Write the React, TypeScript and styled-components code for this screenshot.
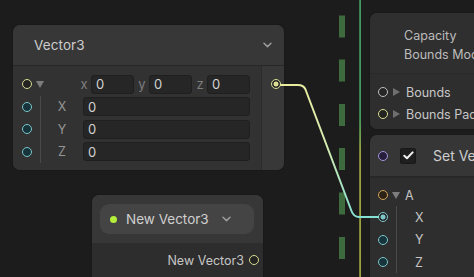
import React from "react";
import styled, { createGlobalStyle, css } from "styled-components";

const GlobalStyle = createGlobalStyle`
  html, body { margin: 0; padding: 0; background: #1c1c1c; }
  body { font-family: Inter, "Noto Sans", sans-serif; overflow: hidden; }
  * { box-sizing: border-box; }
`;

const Canvas = styled.div`
  position: relative;
  width: 474px;
  height: 277px;
  overflow: hidden;
  background: #1c1c1c;
`;

const Layer = styled.svg<{ $top?: boolean }>`
  position: absolute;
  left: 0;
  top: 0;
  width: 474px;
  height: 277px;
  pointer-events: none;
  z-index: ${(p) => (p.$top ? 5 : 0)};
`;

const Node = styled.div<{ $x: number; $y: number; $w: number; $h?: number }>`
  position: absolute;
  left: ${(p) => p.$x}px;
  top: ${(p) => p.$y}px;
  width: ${(p) => p.$w}px;
  ${(p) => (p.$h ? `height: ${p.$h}px;` : "")}
  border-radius: 7px;
  overflow: hidden;
  display: flex;
  flex-direction: column;
  background: #303030;
  box-shadow: 0 0 0 1px #191919;
  z-index: 1;
`;

const Header = styled.div<{ $h: number }>`
  height: ${(p) => p.$h}px;
  flex: none;
  display: flex;
  align-items: center;
  background: #373737;
  border-bottom: 1px solid #272727;
`;

const TitleHeader = styled(Header)`
  justify-content: space-between;
  padding: 0 12px 0 21px;
`;

const Title = styled.span`
  font-size: 13.5px;
  color: #cdcdcd;
  letter-spacing: 0.1px;
`;

const Body = styled.div`
  flex: 1;
  display: flex;
`;

const Inputs = styled.div`
  flex: 1;
  display: flex;
  flex-direction: column;
  padding: 7px 11px 7px 9px;
  background: #323232;
`;

const Outputs = styled.div`
  width: 23px;
  flex: none;
  display: flex;
  flex-direction: column;
  padding: 7px 0 0 9px;
  background: #383838;
  border-left: 1px solid #2b2b2b;
`;

const Row = styled.div<{ $h?: number }>`
  height: ${(p) => p.$h ?? 22.5}px;
  display: flex;
  align-items: center;
  flex: none;
`;

type PortKind = "yellow" | "teal" | "grey" | "purple" | "orange";
const portColors: Record<PortKind, [string, string]> = {
  yellow: ["#d9dd92", "#232321"],
  teal: ["#7cc6ca", "#16343a"],
  grey: ["#bfbfbf", "#262626"],
  purple: ["#a594d9", "#261e3c"],
  orange: ["#d0a35d", "#2c2316"],
};

const Port = styled.span<{ $kind: PortKind; $on?: boolean }>`
  width: 10px;
  height: 10px;
  flex: none;
  border-radius: 50%;
  border: 1.6px solid ${(p) => portColors[p.$kind][0]};
  background: ${(p) => portColors[p.$kind][1]};
  ${(p) =>
    p.$on &&
    css`
      background: radial-gradient(circle, ${portColors[p.$kind][0]} 0 2.2px, #262626 2.8px);
    `}
`;

const TriDown = styled.span<{ $ml: number }>`
  width: 0;
  height: 0;
  flex: none;
  margin-left: ${(p) => p.$ml}px;
  border-left: 4.5px solid transparent;
  border-right: 4.5px solid transparent;
  border-top: 7px solid #7d7d7d;
`;

const TriRight = styled.span`
  width: 0;
  height: 0;
  flex: none;
  margin-left: 5px;
  border-top: 4.5px solid transparent;
  border-bottom: 4.5px solid transparent;
  border-left: 7px solid #6f6f6f;
`;

const Guide = styled.span<{ $ml: number }>`
  width: 1px;
  align-self: stretch;
  flex: none;
  margin-left: ${(p) => p.$ml}px;
  background: #4a4a4a;
`;

const AxisRowLabel = styled.span<{ $w: number; $ml: number }>`
  width: ${(p) => p.$w}px;
  margin-left: ${(p) => p.$ml}px;
  flex: none;
  text-align: center;
  font-size: 12.5px;
  color: #959595;
`;

const Field = styled.div<{ $w?: number }>`
  ${(p) => (p.$w ? `width: ${p.$w}px; flex: none;` : "flex: 1;")}
  height: 19px;
  border-radius: 3px;
  background: #262626;
  border: 1px solid #1f1f1f;
  display: flex;
  align-items: center;
  padding-left: 4px;
  font-size: 13px;
  color: #d2d2d2;
`;

const VecFields = styled.div`
  margin-left: auto;
  display: flex;
  align-items: center;
  gap: 4px;
`;

const AxisGroup = styled.div`
  display: flex;
  align-items: center;
  gap: 3px;
`;

const Axis = styled.span`
  width: 8px;
  text-align: center;
  font-size: 13px;
  color: #7e7e7e;
`;

/* New Vector3 node */
const PillHeader = styled(Header)`
  padding: 0 9px 0 8px;
  border-bottom: none;
`;

const Pill = styled.div`
  flex: 1;
  height: 30px;
  border-radius: 9px;
  background: #444444;
  display: flex;
  align-items: center;
  padding-left: 10px;
`;

const Dot = styled.span`
  width: 7px;
  height: 7px;
  border-radius: 50%;
  background: #b2ee3a;
  flex: none;
`;

const PillText = styled.span`
  margin-left: 9px;
  font-size: 13.5px;
  color: #cfcfcf;
`;

const PlainBody = styled.div<{ $bg?: string; $pt?: number }>`
  flex: 1;
  display: flex;
  flex-direction: column;
  padding-top: ${(p) => p.$pt ?? 0}px;
  background: ${(p) => p.$bg ?? "#2f2f2f"};
`;

const OutRow = styled(Row)`
  justify-content: flex-end;
  padding-right: 4px;
  gap: 5px;
`;

const PortText = styled.span<{ $ml?: number }>`
  font-size: 12.5px;
  color: #c6c6c6;
  white-space: nowrap;
  margin-left: ${(p) => p.$ml ?? 0}px;
`;

/* right nodes */
const PropList = styled.div`
  display: flex;
  flex-direction: column;
  padding: 12.5px 0 9.5px 34px;
  background: #2f2f2f;
`;

const PropLine = styled.div`
  height: 19px;
  display: flex;
  align-items: center;
  font-size: 12.5px;
  color: #bcbcbc;
  white-space: nowrap;
`;

const SideRows = styled.div<{ $pt: number }>`
  display: flex;
  flex-direction: column;
  padding: ${(p) => p.$pt}px 0 0 8px;
  flex: 1;
  background: #2e2e2e;
  border-top: 1px solid #292929;
`;

const CheckHeader = styled(Header)`
  padding-left: 8px;
  background: #363636;
`;

const Check = styled.span`
  width: 16px;
  height: 16px;
  margin-left: 12px;
  border-radius: 2px;
  background: #1f1f1f;
  border: 1px solid #181818;
  display: flex;
  align-items: center;
  justify-content: center;
  flex: none;
`;

const HeaderText = styled.span`
  margin-left: 17px;
  font-size: 14px;
  color: #cdcdcd;
  white-space: nowrap;
`;

const Chevron = ({ ml = 0 }: { ml?: number }) => (
  <svg width="9" height="6" viewBox="0 0 9 6" style={{ marginLeft: ml, flex: "none" }}>
    <path d="M1 1.2 L4.5 4.6 L8 1.2" fill="none" stroke="#9a9a9a" strokeWidth="1.5" strokeLinecap="round" strokeLinejoin="round" />
  </svg>
);

const dashes = [15.5, 59.5, 104, 148, 192.5, 237];

export default function App() {
  return (
    <>
      <GlobalStyle />
      <Canvas>
        <Layer>
          <defs>
            <linearGradient id="guide" x1="0" y1="0" x2="0" y2="277" gradientUnits="userSpaceOnUse">
              <stop offset="0.42" stopColor="#46a865" />
              <stop offset="0.55" stopColor="#a7b246" />
              <stop offset="1" stopColor="#aab045" />
            </linearGradient>
          </defs>
          {dashes.map((y) => (
            <rect key={y} x="339" y={y} width="6" height="22" fill="#3e6b3d" />
          ))}
          <rect x="359.3" y="0" width="1.6" height="277" fill="url(#guide)" />
        </Layer>

        <Node $x={13} $y={25} $w={271} $h={145}>
          <TitleHeader $h={41}>
            <Title>Vector3</Title>
            <Chevron />
          </TitleHeader>
          <Body>
            <Inputs>
              <Row>
                <Port $kind="yellow" />
                <TriDown $ml={4} />
                <VecFields>
                  <AxisGroup>
                    <Axis>x</Axis>
                    <Field $w={43}>0</Field>
                  </AxisGroup>
                  <AxisGroup>
                    <Axis>y</Axis>
                    <Field $w={43}>0</Field>
                  </AxisGroup>
                  <AxisGroup>
                    <Axis>z</Axis>
                    <Field $w={43}>0</Field>
                  </AxisGroup>
                </VecFields>
              </Row>
              {["X", "Y", "Z"].map((a) => (
                <Row key={a}>
                  <Port $kind="teal" />
                  <Guide $ml={8} />
                  <AxisRowLabel $w={14} $ml={14}>{a}</AxisRowLabel>
                  <Field style={{ marginLeft: 14 }}>0</Field>
                </Row>
              ))}
            </Inputs>
            <Outputs>
              <Row>
                <Port $kind="yellow" $on />
              </Row>
            </Outputs>
          </Body>
        </Node>

        <Node $x={92} $y={195} $w={171} $h={95}>
          <PillHeader $h={48}>
            <Pill>
              <Dot />
              <PillText>New Vector3</PillText>
              <Chevron ml={13} />
            </Pill>
          </PillHeader>
          <PlainBody $pt={8} $bg="#2d2d2d">
            <OutRow $h={18}>
              <PortText>New Vector3</PortText>
              <Port $kind="yellow" />
            </OutRow>
          </PlainBody>
        </Node>

        <Node $x={370} $y={13} $w={130} $h={116}>
          <PropList>
            <PropLine>Capacity</PropLine>
            <PropLine>Bounds Mode</PropLine>
          </PropList>
          <SideRows $pt={7}>
            <Row $h={22}>
              <Port $kind="grey" />
              <TriRight />
              <PortText $ml={6}>Bounds</PortText>
            </Row>
            <Row $h={22}>
              <Port $kind="yellow" />
              <TriRight />
              <PortText $ml={6}>Bounds Padding</PortText>
            </Row>
          </SideRows>
        </Node>

        <Node $x={370} $y={135} $w={130} $h={160}>
          <CheckHeader $h={42}>
            <Port $kind="purple" />
            <Check>
              <svg width="11" height="9" viewBox="0 0 11 9">
                <path d="M1.3 4.8 L4 7.3 L9.6 1.4" fill="none" stroke="#f0f0f0" strokeWidth="2" strokeLinecap="round" strokeLinejoin="round" />
              </svg>
            </Check>
            <HeaderText>Set Velocity</HeaderText>
          </CheckHeader>
          <SideRows $pt={6}>
            <Row $h={22.3}>
              <Port $kind="orange" />
              <TriDown $ml={4} />
              <PortText $ml={5}>A</PortText>
            </Row>
            {["X", "Y", "Z"].map((a) => (
              <Row key={a} $h={22.3}>
                <Port $kind="teal" $on={a === "X"} />
                <Guide $ml={8} />
                <PortText $ml={18}>{a}</PortText>
              </Row>
            ))}
          </SideRows>
        </Node>

        <Layer $top>
          <defs>
            <linearGradient id="edge" x1="300" y1="85" x2="360" y2="217" gradientUnits="userSpaceOnUse">
              <stop offset="0" stopColor="#e8ec9e" />
              <stop offset="0.45" stopColor="#d6ecb0" />
              <stop offset="1" stopColor="#84e0d2" />
            </linearGradient>
          </defs>
          <path
            d="M280 85 H298 C302 85 304 86 305.5 89.5 L351.5 211 C353 215 355 217 359 217 H379"
            fill="none"
            stroke="url(#edge)"
            strokeWidth="2"
          />
        </Layer>
      </Canvas>
    </>
  );
}
